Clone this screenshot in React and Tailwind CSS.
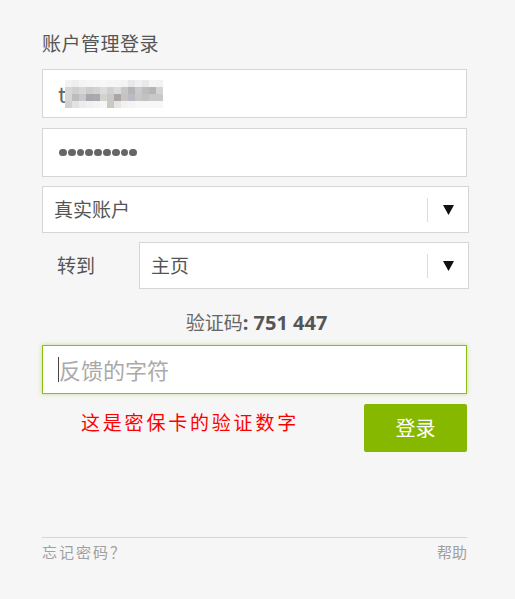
const FONT = { fontFamily: '"Microsoft YaHei", "Noto Sans CJK SC", "Open Sans", sans-serif' };

const MOSAIC = [
  ["#f2f2f2", "#eeeeee", "#f4f4f4", "#f5f5f5", "#f6f6f6", "#f7f7f7", "#f6f6f6", "#f5f5f5", "#f3f3f3", "#e8e8e8", "#f0f0f0", "#e9e9e9", "#f5f5f5", "#f2f3f5"],
  ["#d7d7d7", "#cfcfcf", "#d6d6d6", "#cccccc", "#d2d2d2", "#dcdcdc", "#d0d0d0", "#dadada", "#c6c6c6", "#b5b5b8", "#c9cacc", "#bdbdbd", "#b7b4b1", "#d4d4d4"],
  ["#d6d6d6", "#bebbb8", "#c9c9c9", "#a7a8ab", "#a9aaad", "#d3d2cd", "#c9c9c9", "#aba6a3", "#c4c4c4", "#b8bbc0", "#c7c7c7", "#c4c2bf", "#c8c8c8", "#c9c9c9"],
  ["#d1d1d1", "#e0e2e4", "#ececec", "#f0f0f0", "#f3f3f3", "#f6f6f6", "#cbc7c4", "#e6e6e6", "#f2f2f2", "#f4f4f4", "#f7f7f7", "#f7f7f7", "#f7f7f7", "#f7f7f7"],
];

const Select = ({ label, className }) => (
  <div className={`flex items-center h-[47px] bg-white border border-[#d6d6d6] ${className}`}>
    <span className="flex-1 pl-[11px] text-[19px] text-[#555]">{label}</span>
    <span className="w-px h-[24px] bg-[#dcdcdc]" />
    <span className="w-[40px] flex justify-center">
      <svg width="11" height="10" viewBox="0 0 11 10"><path d="M0 0h11L5.5 10z" fill="#111" /></svg>
    </span>
  </div>
);

export default function App() {
  return (
    <div className="min-h-screen w-[515px] bg-[#f6f6f6]" style={FONT}>
      <div className="pl-[42px] pt-[30px] w-[469px]">
        <h1 className="text-[19px] leading-[26px] text-[#555] tracking-[0.5px]">账户管理登录</h1>

        <div className="mt-[13px] w-[425px] h-[49px] bg-white border border-[#d6d6d6] flex items-center pl-[15px]">
          <span className="text-[22px] text-[#666] leading-none -mt-[2px]">t</span>
          <div className="grid grid-cols-[repeat(14,7px)] -ml-[1px]">
            {MOSAIC.flat().map((c, i) => (
              <div key={i} className="h-[7px]" style={{ background: c }} />
            ))}
          </div>
        </div>

        <div className="mt-[10px] w-[425px] h-[49px] bg-white border border-[#d6d6d6] flex items-center pl-[16px] gap-[1px]">
          {Array.from({ length: 9 }).map((_, i) => (
            <span key={i} className="w-[7.8px] h-[7.8px] rounded-full bg-[#666]" />
          ))}
        </div>

        <Select label="真实账户" className="mt-[9px] w-[427px]" />

        <div className="mt-[9px] flex items-center">
          <span className="w-[97px] pl-[15px] text-[19px] text-[#555]">转到</span>
          <Select label="主页" className="w-[330px]" />
        </div>

        <div className="mt-[20px] text-center w-[429px] text-[19px] leading-[26px] text-[#666]">
          验证码<span className="font-bold text-[20px] text-[#555]" style={{ fontFamily: '"Open Sans", "Liberation Sans", sans-serif' }}>: 751 447</span>
        </div>

        <div className="mt-[9px] w-[425px] h-[49px] bg-white border border-[#8bbf14] shadow-[0_0_4px_rgba(139,191,20,0.5)] flex items-center pl-[15px]">
          <span className="w-px h-[25px] bg-[#444]" />
          <span className="text-[22px] text-[#aaa]">反馈的字符</span>
        </div>

        <div className="mt-[10px] flex items-start w-[425px]">
          <span className="flex-1 pl-[39px] pt-[4px] text-[19px] tracking-[2.8px] text-[#f00]" style={{ fontFamily: '"Noto Sans CJK SC", sans-serif' }}>
            这是密保卡的验证数字
          </span>
          <button className="w-[103px] h-[48px] rounded-[2px] bg-[#86b800] text-white text-[20px]">登录</button>
        </div>

        <div className="mt-[85px] w-[425px] border-t border-[#d6d6d6] pt-[3px] flex justify-between text-[15px] text-[#a0a0a0]">
          <span className="tracking-[2px]">忘记密码？</span>
          <span>帮助</span>
        </div>
      </div>
    </div>
  );
}
